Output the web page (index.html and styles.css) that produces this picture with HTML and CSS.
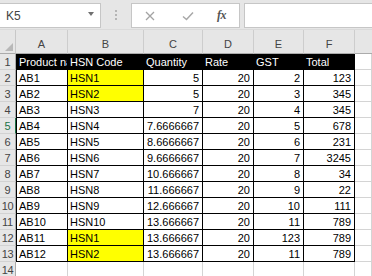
FILE: index.html
```html
<!DOCTYPE html>
<html>
<head>
<meta charset="utf-8">
<link rel="stylesheet" href="styles.css">
</head>
<body>
<div class="app">
  <div class="fbar">
    <div class="namebox"><span class="ref">K5</span><span class="caret"></span></div>
    <div class="dots"><i></i><i></i><i></i></div>
    <div class="btnbox">
      <svg class="ico-x" width="10" height="10" viewBox="0 0 10 10"><path d="M1 1L9 9M9 1L1 9" stroke="#a3a3a3" stroke-width="1.3" fill="none"/></svg>
      <svg class="ico-ok" width="12" height="10" viewBox="0 0 12 10"><path d="M1 5.5L4.5 8.5L11 1.5" stroke="#a8a8a8" stroke-width="1.5" fill="none"/></svg>
      <span class="fx">fx</span>
    </div>
    <div class="finput"></div>
  </div>
  <div class="sheet">
    <div class="corner"><span class="tri"></span></div>
    <div class="ch">A</div><div class="ch">B</div><div class="ch">C</div><div class="ch">D</div><div class="ch">E</div><div class="ch">F</div><div class="ch last"></div>

    <div class="rh">1</div>
    <div class="c hd a">Product name</div><div class="c hd">HSN Code</div><div class="c hd">Quantity</div><div class="c hd">Rate</div><div class="c hd">GST</div><div class="c hd">Total</div><div class="g"></div>

    <div class="rh">2</div>
    <div class="c a">AB1</div><div class="c y">HSN1</div><div class="c n">5</div><div class="c n">20</div><div class="c n">2</div><div class="c n">123</div><div class="g"></div>

    <div class="rh">3</div>
    <div class="c a">AB2</div><div class="c y">HSN2</div><div class="c n">5</div><div class="c n">20</div><div class="c n">3</div><div class="c n">345</div><div class="g"></div>

    <div class="rh">4</div>
    <div class="c a">AB3</div><div class="c">HSN3</div><div class="c n">7</div><div class="c n">20</div><div class="c n">4</div><div class="c n">345</div><div class="g"></div>

    <div class="rh sel">5</div>
    <div class="c a">AB4</div><div class="c">HSN4</div><div class="c n">7.6666667</div><div class="c n">20</div><div class="c n">5</div><div class="c n">678</div><div class="g"></div>

    <div class="rh">6</div>
    <div class="c a">AB5</div><div class="c">HSN5</div><div class="c n">8.6666667</div><div class="c n">20</div><div class="c n">6</div><div class="c n">231</div><div class="g"></div>

    <div class="rh">7</div>
    <div class="c a">AB6</div><div class="c">HSN6</div><div class="c n">9.6666667</div><div class="c n">20</div><div class="c n">7</div><div class="c n">3245</div><div class="g"></div>

    <div class="rh">8</div>
    <div class="c a">AB7</div><div class="c">HSN7</div><div class="c n">10.666667</div><div class="c n">20</div><div class="c n">8</div><div class="c n">34</div><div class="g"></div>

    <div class="rh">9</div>
    <div class="c a">AB8</div><div class="c">HSN8</div><div class="c n">11.666667</div><div class="c n">20</div><div class="c n">9</div><div class="c n">22</div><div class="g"></div>

    <div class="rh">10</div>
    <div class="c a">AB9</div><div class="c">HSN9</div><div class="c n">12.666667</div><div class="c n">20</div><div class="c n">10</div><div class="c n">111</div><div class="g"></div>

    <div class="rh">11</div>
    <div class="c a">AB10</div><div class="c">HSN10</div><div class="c n">13.666667</div><div class="c n">20</div><div class="c n">11</div><div class="c n">789</div><div class="g"></div>

    <div class="rh">12</div>
    <div class="c a">AB11</div><div class="c y">HSN1</div><div class="c n">13.666667</div><div class="c n">20</div><div class="c n">123</div><div class="c n">789</div><div class="g"></div>

    <div class="rh">13</div>
    <div class="c a">AB12</div><div class="c y">HSN2</div><div class="c n">13.666667</div><div class="c n">20</div><div class="c n">11</div><div class="c n">789</div><div class="g"></div>

    <div class="rh">14</div>
    <div class="g a0"></div><div class="g"></div><div class="g"></div><div class="g"></div><div class="g"></div><div class="g"></div><div class="g"></div>
  </div>
</div>
</body>
</html>
```

FILE: styles.css
```css
html, body {
  margin: 0;
  padding: 0;
  background: #e6e6e6;
  font-family: "Liberation Sans", Arial, sans-serif;
  font-size: 11px;
}
.app {
  width: 372px;
  height: 276px;
  overflow: hidden;
  background: #e6e6e6;
}
.fbar {
  height: 29px;
  border-bottom: 1px solid #dadada;
  display: flex;
  align-items: flex-start;
  box-sizing: content-box;
}
.namebox {
  box-sizing: border-box;
  margin-top: 3px;
  margin-left: -1px;
  width: 102px;
  height: 25px;
  background: #fff;
  border: 1px solid #c6c6c6;
  display: flex;
  align-items: center;
  justify-content: space-between;
  padding: 0 6px 0 6px;
}
.ref {
  font-size: 12px;
  color: #444;
}
.caret {
  width: 0;
  height: 0;
  border-left: 3.5px solid transparent;
  border-right: 3.5px solid transparent;
  border-top: 4px solid #707070;
  margin-top: -3px;
}
.dots {
  width: 30px;
  margin-top: 10px;
  display: flex;
  flex-direction: column;
  align-items: center;
  gap: 2px;
}
.dots i {
  display: block;
  width: 2px;
  height: 2px;
  background: #b5b5b5;
}
.btnbox {
  box-sizing: border-box;
  margin-top: 3px;
  width: 109px;
  height: 25px;
  background: #fff;
  border: 1px solid #c6c6c6;
  display: flex;
  align-items: center;
  position: relative;
}
.ico-x { margin-left: 13px; }
.ico-ok { margin-left: 27px; }
.fx {
  margin-left: 23px;
  font-family: "Liberation Serif", serif;
  font-style: italic;
  font-weight: bold;
  font-size: 12px;
  color: #555;
  letter-spacing: -0.5px;
}
.finput {
  box-sizing: border-box;
  margin-top: 3px;
  margin-left: 4px;
  flex: 1;
  height: 25px;
  background: #fff;
  border: 1px solid #c6c6c6;
  margin-right: -2px;
}
.sheet {
  display: grid;
  grid-template-columns: 16px 52px 76px 59px 51px 50px 51px 1fr;
  grid-template-rows: 24px repeat(14, 16px);
  background: #fff;
}
.sheet > div {
  box-sizing: border-box;
  overflow: hidden;
  white-space: nowrap;
}
.corner {
  background: #e6e6e6;
  border-right: 1px solid #c8c8c8;
  border-bottom: 1px solid #ababab;
  position: relative;
}
.tri {
  position: absolute;
  right: 2px;
  bottom: 2px;
  width: 0;
  height: 0;
  border-left: 8px solid transparent;
  border-bottom: 8px solid #b8b8b8;
}
.ch {
  background: #e6e6e6;
  border-right: 1px solid #cdcdcd;
  border-bottom: 1px solid #ababab;
  color: #444;
  text-align: center;
  line-height: 16px;
  padding-top: 6px;
}
.ch.last { border-right: none; }
.rh {
  background: #e6e6e6;
  border-right: 1px solid #ababab;
  border-bottom: 1px solid #d2d2d2;
  color: #444;
  text-align: center;
  line-height: 16px;
  letter-spacing: -0.3px;
}
.rh.sel {
  color: #217346;
  border-right: 1px solid #217346;
}
.c {
  border-right: 1px solid #000;
  border-bottom: 1px solid #000;
  line-height: 16px;
  padding: 0 2px;
  color: #000;
}
.c.a { border-left: 1px solid #000; }
.c.hd {
  background: #000;
  color: #fff;
  text-overflow: clip;
}
.c.y { background: #ffff00; }
.c.n { text-align: right; padding-right: 3px; }
.g {
  border-right: 1px solid #d4d4d4;
  border-bottom: 1px solid #d4d4d4;
}
.g.a0 { border-left: 1px solid #fff; }
```
